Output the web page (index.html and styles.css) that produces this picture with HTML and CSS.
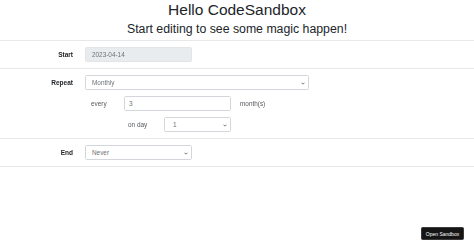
FILE: index.html
```html
<!DOCTYPE html>
<html lang="en">
<head>
<meta charset="utf-8">
<title>CodeSandbox</title>
<link rel="stylesheet" href="styles.css">
</head>
<body>
<div class="app">
  <h1 class="title">Hello CodeSandbox</h1>
  <h2 class="subtitle">Start editing to see some magic happen!</h2>
  <div class="form">
    <div class="row">
      <label class="row-label">Start</label>
      <div class="row-body">
        <div class="control control-disabled w-107">2023-04-14</div>
      </div>
    </div>
    <div class="row">
      <label class="row-label">Repeat</label>
      <div class="row-body stack">
        <div class="control select w-224">Monthly
          <svg class="chev" width="4" height="3" viewBox="0 0 4 3"><path d="M0.5 0.7 L2 2.2 L3.5 0.7" fill="none" stroke="#555" stroke-width="0.8"/></svg>
        </div>
        <div class="sub-row">
          <span class="sub-label every">every</span>
          <div class="control w-107 input-num">3</div>
          <span class="unit">month(s)</span>
        </div>
        <div class="sub-row">
          <span class="sub-label onday">on day</span>
          <div class="control select w-67 day">1
            <svg class="chev" width="4" height="3" viewBox="0 0 4 3"><path d="M0.5 0.7 L2 2.2 L3.5 0.7" fill="none" stroke="#555" stroke-width="0.8"/></svg>
          </div>
        </div>
      </div>
    </div>
    <div class="row">
      <label class="row-label">End</label>
      <div class="row-body">
        <div class="control select w-107">Never
          <svg class="chev" width="4" height="3" viewBox="0 0 4 3"><path d="M0.5 0.7 L2 2.2 L3.5 0.7" fill="none" stroke="#555" stroke-width="0.8"/></svg>
        </div>
      </div>
    </div>
  </div>
</div>
<div class="open-btn">Open Sandbox</div>
</body>
</html>
```
FILE: styles.css
```css
html, body {
  margin: 0;
  padding: 0;
  background: #ffffff;
}
body {
  font-family: "Liberation Sans", Arial, Helvetica, sans-serif;
  color: #212529;
  width: 474px;
  height: 248px;
  position: relative;
  overflow: hidden;
}
.app {
  text-align: center;
}
.title {
  margin: 0;
  padding-top: 1px;
  font-size: 15.5px;
  line-height: 18px;
  font-weight: 400;
}
.subtitle {
  margin: 3px 0 0;
  font-size: 12.3px;
  line-height: 15px;
  font-weight: 400;
  height: 18px;
}
.form {
  text-align: left;
  border-bottom: 1px solid #e7e8ea;
  opacity: 0.999;
}
.row {
  display: grid;
  grid-template-columns: 79px 1fr;
  border-top: 1px solid #e7e8ea;
  padding: 6px 0;
}
.row-label {
  font-size: 6.5px;
  font-weight: 700;
  text-align: right;
  padding-right: 6px;
  line-height: 15px;
  color: #212529;
}
.row-body {
  padding-left: 6px;
}
.stack {
  display: flex;
  flex-direction: column;
  gap: 6px;
}
.control {
  box-sizing: border-box;
  height: 15px;
  border: 0.5px solid #d3d7db;
  border-radius: 1.6px;
  font-size: 6.4px;
  line-height: 14px;
  color: #6d7277;
  padding-left: 6px;
  background: #fff;
  position: relative;
}
.control-disabled {
  background: #e9ecef;
  border-color: #e2e5e8;
}
.w-107 { width: 107px; }
.w-224 { width: 224px; }
.w-67 { width: 67px; }
.input-num { padding-left: 4px; }
.day { padding-left: 8px; }
.chev {
  position: absolute;
  right: 3px;
  top: 6px;
}
.sub-row {
  display: flex;
  align-items: center;
  height: 15px;
  font-size: 6.4px;
  color: #55595e;
}
.every {
  width: 33px;
  padding-left: 6px;
}
.onday {
  margin-left: 43px;
  width: 36px;
}
.unit {
  margin-left: 9px;
}
.open-btn {
  position: absolute;
  left: 421px;
  top: 227px;
  width: 43px;
  height: 13px;
  box-sizing: border-box;
  background: #151515;
  border: 0.5px solid #3a3a3a;
  border-radius: 1.5px;
  color: #ffffff;
  font-size: 5px;
  line-height: 12px;
  text-align: center;
  opacity: 0.999;
}
```
